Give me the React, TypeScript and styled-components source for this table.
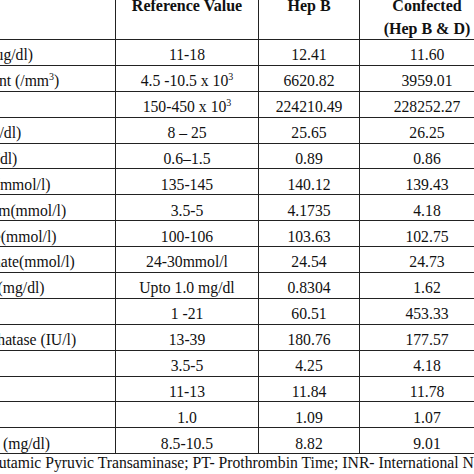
import styled, { createGlobalStyle } from 'styled-components';
import { ReactNode } from 'react';

const GlobalStyle = createGlobalStyle`
  html, body {
    margin: 0;
    padding: 0;
    background: #ffffff;
    overflow: hidden;
  }
  body {
    font-family: 'Liberation Serif', 'Times New Roman', serif;
    color: #111;
  }
`;

type Row = {
  label: ReactNode;
  range: ReactNode;
  hepB: string;
  coinfected: string;
};

const Sup = styled.sup`
  font-size: 10px;
  line-height: 0;
  vertical-align: 6px;
`;

// the picture is a crop of a wider table, so the first column runs off the left edge
const rows: Row[] = [
  { label: 'Haemoglobin (ug/dl)', range: '11-18', hepB: '12.41', coinfected: '11.60' },
  {
    label: <>Total WBC count (/mm<Sup>3</Sup>)</>,
    range: <>4.5 -10.5 x 10<Sup>3</Sup></>,
    hepB: '6620.82',
    coinfected: '3959.01',
  },
  { label: 'Platelets', range: <>150-450 x 10<Sup>3</Sup></>, hepB: '224210.49', coinfected: '228252.27' },
  { label: 'Blood urea (mg/dl)', range: '8 – 25', hepB: '25.65', coinfected: '26.25' },
  { label: 'Creatinine (mg/dl)', range: '0.6–1.5', hepB: '0.89', coinfected: '0.86' },
  { label: 'Serum Sodium(mmol/l)', range: '135-145', hepB: '140.12', coinfected: '139.43' },
  { label: 'Serum Potassium(mmol/l)', range: '3.5-5', hepB: '4.1735', coinfected: '4.18' },
  { label: 'Serum Chloride(mmol/l)', range: '100-106', hepB: '103.63', coinfected: '102.75' },
  { label: 'Serum bicarbonate(mmol/l)', range: '24-30mmol/l', hepB: '24.54', coinfected: '24.73' },
  { label: 'Total Bilirubin (mg/dl)', range: 'Upto 1.0 mg/dl', hepB: '0.8304', coinfected: '1.62' },
  { label: 'SGPT (IU/l)', range: '1 -21', hepB: '60.51', coinfected: '453.33' },
  { label: 'Alkaline Phosphatase (IU/l)', range: '13-39', hepB: '180.76', coinfected: '177.57' },
  { label: 'Albumin (g/dl)', range: '3.5-5', hepB: '4.25', coinfected: '4.18' },
  { label: 'PT (sec)', range: '11-13', hepB: '11.84', coinfected: '11.78' },
  { label: 'INR', range: '1.0', hepB: '1.09', coinfected: '1.07' },
  { label: 'Serum Calcium (mg/dl)', range: '8.5-10.5', hepB: '8.82', coinfected: '9.01' },
];

const App = () => {
  return (
    <>
      <GlobalStyle />
      <Sheet>
        <Grid>
          <HeadCell />
          <HeadCell>Reference Value</HeadCell>
          <HeadCell>Hep B</HeadCell>
          <HeadCell $last>
            Confected
            <br />
            (Hep B &amp; D)
          </HeadCell>

          {rows.map((row, index) => (
            <RowGroup key={index}>
              <LabelCell>{row.label}</LabelCell>
              <ValueCell>{row.range}</ValueCell>
              <ValueCell>{row.hepB}</ValueCell>
              <ValueCell $last>{row.coinfected}</ValueCell>
            </RowGroup>
          ))}
        </Grid>
        <Footnote>
          SGPT- Serum Glutamic Pyruvic Transaminase; PT- Prothrombin Time; INR- International Normalized Ratio
        </Footnote>
      </Sheet>
    </>
  );
};

export default App;

const Sheet = styled.div`
  width: 602px;
  margin-left: -108px;
  margin-top: -6px;
`;

const Grid = styled.div`
  display: grid;
  grid-template-columns: 224px 143px 101px 134px;
  grid-template-rows: 46px;
  grid-auto-rows: 25.9px;
  font-size: 15.7px;
`;

const RowGroup = styled.div`
  display: contents;
`;

const Cell = styled.div<{ $last?: boolean }>`
  box-sizing: border-box;
  border-bottom: 1px solid #222;
  border-right: ${(p) => (p.$last ? 'none' : '1px solid #222')};
  white-space: nowrap;
  overflow: hidden;
`;

const HeadCell = styled(Cell)`
  font-size: 16px;
  font-weight: bold;
  line-height: 23px;
  text-align: center;
`;

const LabelCell = styled(Cell)`
  padding: 7.3px 0 0 9px;
  line-height: 16px;
`;

const ValueCell = styled(Cell)`
  padding-top: 7.3px;
  line-height: 16px;
  text-align: center;
`;

const Footnote = styled.p`
  margin: 0;
  font-size: 15.7px;
  line-height: 18px;
  white-space: nowrap;
`;
